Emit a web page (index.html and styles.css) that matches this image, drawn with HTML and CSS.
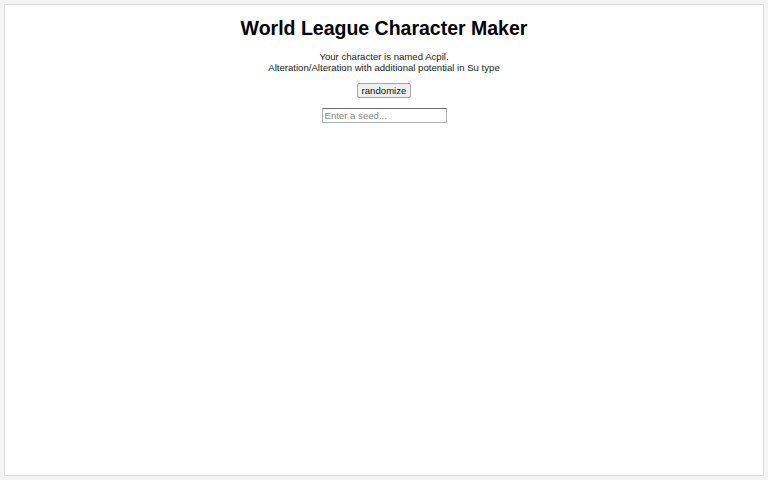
FILE: index.html
```html
<!DOCTYPE html>
<html lang="en">
<head>
    <meta charset="UTF-8">
    <meta name="viewport" content="width=device-width, initial-scale=1.0">
    <title>World League Character Maker</title>
    <link rel="stylesheet" href="styles.css">
</head>
<body>
    <div class="container">
        <h1>World League Character Maker</h1>

        <div class="result">
            <p>Your character is named Acpil.</p>
            <p>Alteration/Alteration with additional potential in Su type</p>
        </div>

        <div class="controls">
            <button class="randomize" type="button">randomize</button>
            <input class="seed" type="text" placeholder="Enter a seed...">
        </div>
    </div>
</body>
</html>
```

FILE: styles.css
```css
* {
    margin: 0;
    padding: 0;
    box-sizing: border-box;
}

html, body {
    height: 100%;
}

body {
    font-family: 'Liberation Sans', Arial, sans-serif;
    background: #f3f3f3;
    padding: 4px;
}

.container {
    background: white;
    border: 1px solid #dcdcdc;
    height: 472px;
    text-align: center;
    padding-top: 12px;
}

h1 {
    color: #000;
    font-size: 19.5px;
    font-weight: bold;
    line-height: 22px;
    margin-bottom: 12px;
}

.result p {
    font-size: 9.6px;
    line-height: 11px;
    color: #222;
}

.controls {
    display: flex;
    flex-direction: column;
    align-items: center;
    gap: 10px;
    margin-top: 10px;
}

.randomize {
    font-family: 'Liberation Sans', Arial, sans-serif;
    font-size: 9.6px;
    padding: 1px 4px;
    height: 15px;
    background: #f0f0f0;
    border: 1px solid #a6a6a6;
    border-radius: 2px;
    color: #111;
}

.seed {
    font-family: 'Liberation Sans', Arial, sans-serif;
    font-size: 9.6px;
    width: 125px;
    height: 15px;
    padding: 1px 2px;
    border: 1px solid #b0b0b0;
    border-top-color: #6f6f6f;
    border-radius: 1px;
}

.seed::placeholder {
    color: #888;
}
```
